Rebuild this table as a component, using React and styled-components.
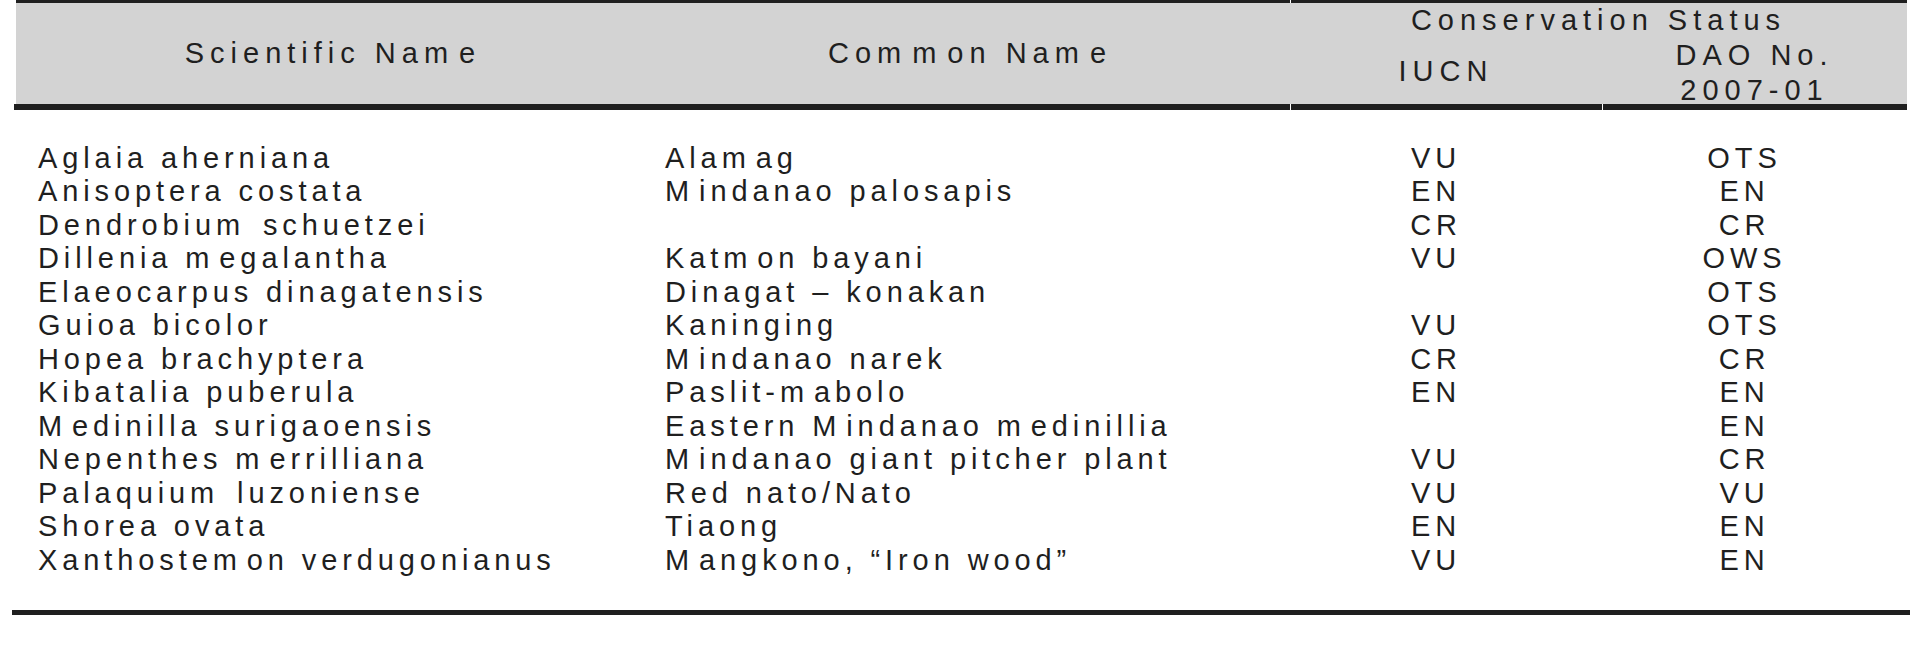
import React from 'react'
import styled, { createGlobalStyle } from 'styled-components'

const ink = '#1f1f1f'
const shade = '#d3d3d3'
const columns = '634px 640px 312px 305px'

const GlobalStyle = createGlobalStyle`
    html, body {
        margin: 0;
        padding: 0;
        background: #fff;
    }

    body {
        font-family: "Liberation Sans", Arial, sans-serif;
        color: ${ink};
        -webkit-font-smoothing: antialiased;
    }
`

const Page = styled.div`
    width: 1912px;
    height: 650px;
    overflow: hidden;
    display: flex;
    flex-direction: column;
`

const Header = styled.div`
    display: flex;
    flex-direction: column;
    padding-left: 16px;
    width: 1891px;
`

const Rule = styled.div`
    display: flex;
    gap: 1px;
    margin-left: ${props => props.offset || 0}px;
`

const RuleSegment = styled.div`
    height: ${props => props.thick}px;
    width: ${props => props.width}px;
    background: ${ink};
`

const HeadGrid = styled.div`
    display: grid;
    grid-template-columns: ${columns};
    grid-template-rows: 35px 66px;
    background: ${shade};
    height: 101px;
`

const HeadCell = styled.div`
    font-size: 29px;
    line-height: 35px;
    letter-spacing: 6px;
    text-align: center;
    grid-column: ${props => props.col};
    grid-row: ${props => props.row};
    align-self: ${props => props.align || 'center'};
    white-space: nowrap;
`

const Body = styled.div`
    display: flex;
    flex-direction: column;
    padding: 31.5px 0 0 14px;
`

const Row = styled.div`
    display: grid;
    grid-template-columns: 626px 640px 312px 305px;
    height: 33.5px;
    font-size: 29px;
    line-height: 33.5px;
    letter-spacing: 4.9px;
    white-space: nowrap;
`

const Cell = styled.div`
    text-align: ${props => props.center ? 'center' : 'left'};
    padding-left: ${props => props.indent || 0}px;
`

// the typeset original leaves a wider gap after every m
const WideM = styled.span`
    margin-right: 5px;
`

const BottomRule = styled.div`
    margin: 33px 0 0 12px;
    width: 1898px;
    height: 5px;
    background: ${ink};
`

function Typeset({ children }) {
    return children.split(/([mM])/).map((part, i) =>
        part === 'm' || part === 'M' ? <WideM key={i}>{part}</WideM> : part
    )
}

const species = [
    ['Aglaia aherniana', 'Alamag', 'VU', 'OTS'],
    ['Anisoptera costata', 'Mindanao palosapis', 'EN', 'EN'],
    ['Dendrobium schuetzei', '', 'CR', 'CR'],
    ['Dillenia megalantha', 'Katmon bayani', 'VU', 'OWS'],
    ['Elaeocarpus dinagatensis', 'Dinagat \u2013 konakan', '', 'OTS'],
    ['Guioa bicolor', 'Kaninging', 'VU', 'OTS'],
    ['Hopea brachyptera', 'Mindanao narek', 'CR', 'CR'],
    ['Kibatalia puberula', 'Paslit-mabolo', 'EN', 'EN'],
    ['Medinilla surigaoensis', 'Eastern Mindanao medinillia', '', 'EN'],
    ['Nepenthes merrilliana', 'Mindanao giant pitcher plant', 'VU', 'CR'],
    ['Palaquium luzoniense', 'Red nato/Nato', 'VU', 'VU'],
    ['Shorea ovata', 'Tiaong', 'EN', 'EN'],
    ['Xanthostemon verdugonianus', 'Mangkono, \u201CIron wood\u201D', 'VU', 'EN']
]

function App() {
    return <Page>
        <GlobalStyle />

        <Header>
            <Rule>
                <RuleSegment thick={3} width={1274} />
                <RuleSegment thick={3} width={616} />
            </Rule>

            <HeadGrid>
                <HeadCell col="1" row="1 / span 2"><Typeset>Scientific Name</Typeset></HeadCell>
                <HeadCell col="2" row="1 / span 2"><Typeset>Common Name</Typeset></HeadCell>
                <HeadCell col="3 / span 2" row="1" align="start">Conservation Status</HeadCell>
                <HeadCell col="3" row="2">IUCN</HeadCell>
                <HeadCell col="4" row="2" align="start">DAO No.<br />2007-01</HeadCell>
            </HeadGrid>

            <Rule offset={-2}>
                <RuleSegment thick={6} width={1276} />
                <RuleSegment thick={6} width={311} />
                <RuleSegment thick={6} width={304} />
            </Rule>
        </Header>

        <Body>
            {species.map(([scientific, common, iucn, dao]) => <Row key={scientific}>
                <Cell indent={24}><Typeset>{scientific}</Typeset></Cell>
                <Cell indent={25}><Typeset>{common}</Typeset></Cell>
                <Cell center>{iucn}</Cell>
                <Cell center>{dao}</Cell>
            </Row>)}
        </Body>

        <BottomRule />
    </Page>
}

export default App
